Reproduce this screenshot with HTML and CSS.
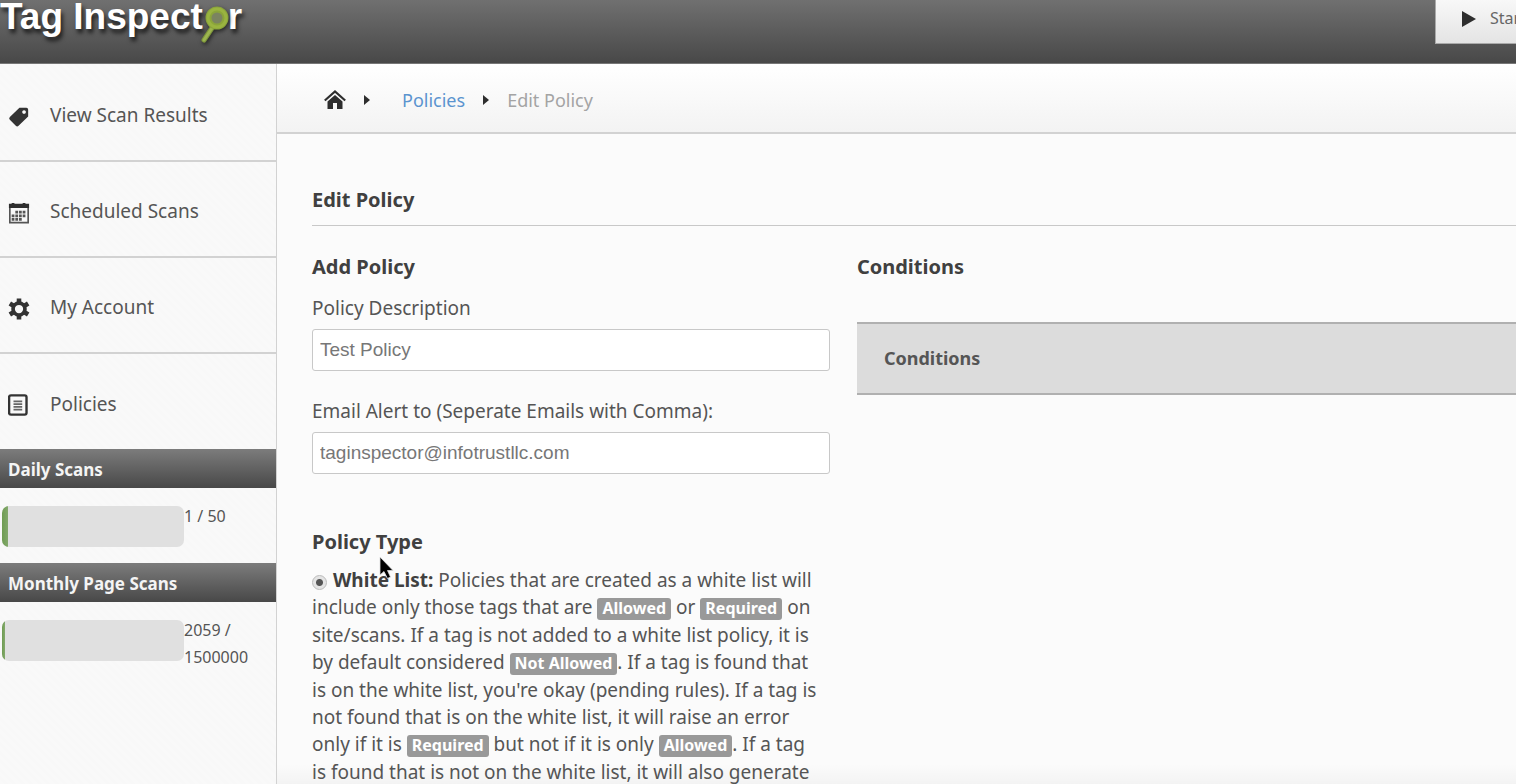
FILE: index.html
```
<!DOCTYPE html>
<html lang="en">
<head>
<meta charset="utf-8">
<title>Tag Inspector - Edit Policy</title>
<link rel="stylesheet" href="styles.css">
</head>
<body>
<header class="topbar">
  <a class="logo" href="#">Tag Inspect<svg class="lens" width="30" height="42" viewBox="0 0 30 42" aria-hidden="true"><path d="M12 26 4 38" stroke="#7d963a" stroke-width="5" stroke-linecap="round"/><path d="M12 26 4 38" stroke="#9db550" stroke-width="3" stroke-linecap="round"/><circle cx="17" cy="16" r="8.5" fill="#7b8460" stroke="#8ba53a" stroke-width="6"/><circle cx="17" cy="16" r="9" fill="none" stroke="#9ab440" stroke-width="3"/></svg>r</a>
  <button class="start" type="button"><svg width="14" height="16" viewBox="0 0 14 16" aria-hidden="true"><path d="M0 0 14 8 0 16Z" fill="#2e2e2e"/></svg>Start</button>
</header>
<div class="shell">
  <aside class="sidebar">
    <nav class="menu">
      <a class="menu-item" href="#"><svg class="icon" viewBox="0 0 24 24" aria-hidden="true"><path fill="#333" fill-rule="evenodd" d="M12.500 2H20Q22 2 22 4V11.500L11.500 21.500Q10 23 8.500 21.500L2 15Q.5 13.500 2 12ZM17.500 4.500a2 2 0 1 0 .01 0Z"/></svg>View Scan Results</a>
      <a class="menu-item" href="#"><svg class="icon" viewBox="0 0 24 24" aria-hidden="true"><path fill="none" stroke="#555" stroke-width="1.800" d="M2 3V22.500H22V3"/><path fill="#2e2e2e" d="M1 2H4V1H7V2H16V1H19V2H23V6.500H1Z"/><path stroke="#555" stroke-width="3" stroke-dasharray="3 1" d="M8 11H20M4 15H20M4 19H16"/></svg>Scheduled Scans</a>
      <a class="menu-item" href="#"><svg class="icon" viewBox="0 0 24 24" aria-hidden="true"><g fill="none" stroke="#333"><circle cx="12" cy="12" r="6.500" stroke-width="4"/><path stroke-width="5" d="M12 .5V5M12 19V23.500M2 6 6 8.500M18 15.500 22 18M2 18 6 15.500M18 8.500 22 6"/></g></svg>My Account</a>
      <a class="menu-item" href="#"><svg class="icon" viewBox="0 0 24 24" aria-hidden="true"><rect x="1.200" y="1.500" width="19" height="21" rx="2" fill="none" stroke="#333" stroke-width="2.600"/><path stroke="#666" stroke-width="1.800" d="M6 8H15.500M6 11H15.500M6 14H15.500M6 17H15.500"/></svg>Policies</a>
    </nav>
    <section class="usage">
      <h2 class="usage-title">Daily Scans</h2>
      <div class="usage-row"><div class="meter"><span class="fill" style="width:6px"></span></div><span class="count">1 / 50</span></div>
    </section>
    <section class="usage">
      <h2 class="usage-title">Monthly Page Scans</h2>
      <div class="usage-row"><div class="meter"><span class="fill" style="width:3px"></span></div><span class="count">2059 / 1500000</span></div>
    </section>
  </aside>
  <main class="main">
    <nav class="crumbs" aria-label="Breadcrumb">
      <a class="home" href="#" aria-label="Home"><svg width="22" height="20" viewBox="0 0 22 20"><path fill="none" stroke="#2e2e2e" stroke-width="2.200" d="M.8 10.500 11 1.500 21.200 10.500"/><path fill="#2e2e2e" d="M11 5 18.500 11.500V19H13V13H9V19H3.500V11.500Z"/></svg></a>
      <svg class="arrow first" width="6" height="10" viewBox="0 0 6 10" aria-hidden="true"><path d="M0 0 6 5 0 10Z"/></svg>
      <a class="crumb-link" href="#">Policies</a>
      <svg class="arrow" width="6" height="10" viewBox="0 0 6 10" aria-hidden="true"><path d="M0 0 6 5 0 10Z"/></svg>
      <span class="crumb-current">Edit Policy</span>
    </nav>
    <div class="content">
      <h1 class="title">Edit Policy</h1>
      <div class="columns">
        <form class="form">
          <h2 class="heading">Add Policy</h2>
          <label class="label" for="desc">Policy Description</label>
          <input class="field" id="desc" type="text" value="Test Policy">
          <label class="label" for="mail">Email Alert to (Seperate Emails with Comma):</label>
          <input class="field" id="mail" type="text" value="taginspector@infotrustllc.com">
          <h2 class="heading type-heading">Policy Type<svg class="pointer" width="16" height="24" viewBox="0 0 16 24" aria-hidden="true"><path d="M1 1V19L5 15.500 8.500 22.500 11.500 21 8.500 14.500H14Z" fill="#000" stroke="#ddd" stroke-width=".8"/></svg></h2>
          <p class="text"><input class="radio" id="white" type="radio" name="type" checked><label for="white"><b>White List:</b></label> Policies that are created as a white list will<br>include only those tags that are <span class="tag">Allowed</span> or <span class="tag">Required</span> on<br>site/scans. If a tag is not added to a white list policy, it is<br>by default considered <span class="tag">Not Allowed</span>. If a tag is found that<br>is on the white list, you're okay (pending rules). If a tag is<br>not found that is on the white list, it will raise an error<br>only if it is <span class="tag">Required</span> but not if it is only <span class="tag">Allowed</span>. If a tag<br>is found that is not on the white list, it will also generate</p>
        </form>
        <section class="conditions">
          <h2 class="heading">Conditions</h2>
          <table class="table"><thead><tr><th scope="col">Conditions</th></tr></thead></table>
        </section>
      </div>
    </div>
  </main>
</div>
</body>
</html>
```
FILE: styles.css
```
* { box-sizing: border-box; }
body {
  margin: 0;
  height: 100vh;
  overflow: hidden;
  display: flex;
  flex-direction: column;
  background: #fbfbfb;
  color: #555;
  font: 19px/27px "Noto Sans", "Open Sans", sans-serif;
}
a { color: inherit; text-decoration: none; }
h1, h2, p { margin: 0; }
svg { flex: none; }

.topbar {
  display: flex;
  justify-content: space-between;
  align-items: flex-start;
  flex: none;
  height: 64px;
  background: linear-gradient(#707070, #484848);
  border-bottom: 1px solid #777;
  overflow: hidden;
}
.logo {
  display: flex;
  color: #fff;
  font: bold 37px/34px "Liberation Sans", Arial, sans-serif;
  text-shadow: 2px 4px 4px rgba(0, 0, 0, .7);
}
.lens { margin: 2px -2px 0 -3px; filter: drop-shadow(1px 2px 2px rgba(0, 0, 0, .6)); }
.start {
  display: flex;
  align-items: center;
  gap: 14px;
  width: 81px;
  height: 44px;
  padding: 0 0 6px 26px;
  border: 1px solid #aaa;
  border-width: 0 0 1px 1px;
  background: linear-gradient(#f8f8f8, #e4e4e4);
  color: #666;
  font: 16px/27px "Noto Sans", "Open Sans", sans-serif;
  overflow: hidden;
}

.shell { display: flex; flex: 1; min-height: 0; }
.sidebar {
  flex: none;
  width: 277px;
  border-right: 1px solid #d2d2d2;
  background: repeating-linear-gradient(45deg, #f9f9f9 0 3px, #f8f8f8 3px 6px);
}
.menu { padding-top: 1px; }
.menu-item {
  display: flex;
  align-items: center;
  gap: 20px;
  height: 97px;
  padding: 6px 8px 0;
  border-bottom: 2px solid #d2d2d2;
  margin-bottom: -1px;
}
.menu-item:last-child { height: 96px; border-bottom: 0; margin-bottom: 0; }
.icon { width: 22px; height: 22px; margin-top: 2px; }
.usage { height: 114px; }
.usage-title {
  padding: 7px 8px 5px;
  background: linear-gradient(#7c7c7c, #484848);
  color: #f4f4f4;
  font-size: 17px;
  line-height: 27px;
}
.usage-row { display: flex; align-items: flex-start; padding: 15px 0 0 2px; }
.meter {
  flex: none;
  width: 182px;
  height: 41px;
  margin-top: 3px;
  border-radius: 7px;
  background: #e0e0e0;
  overflow: hidden;
}
.fill { display: block; height: 100%; background: linear-gradient(90deg, #6f9c52, #83a96c); }
.count { width: 76px; font-size: 16px; }

.main {
  flex: 1;
  min-width: 0;
  background: linear-gradient(transparent calc(100% - 20px), rgba(0, 0, 0, .03));
  overflow: hidden;
}
.crumbs {
  display: flex;
  align-items: center;
  height: 70px;
  padding: 4px 0 0 47px;
  border-bottom: 2px solid #d2d2d2;
  background: linear-gradient(#fff, #f3f3f3);
  font-size: 18px;
}
.home { display: flex; }
.arrow { margin: 0 18px; fill: #2e2e2e; }
.arrow.first { margin-right: 32px; }
.crumb-link { color: #5b94cf; }
.crumb-current { color: #a4a4a4; }
.content { padding: 52px 0 0 35px; }
.title { padding-bottom: 12px; border-bottom: 1px solid #c8c8c8; font-size: 20px; line-height: 27px; color: #404040; }
.columns { display: grid; grid-template-columns: 11fr 14fr; gap: 27px; padding-top: 27px; }
.heading { font-size: 20px; line-height: 27px; color: #404040; }
.label { display: block; margin-top: 15px; }
.field {
  display: block;
  width: 100%;
  height: 42px;
  margin: 7px 0 27px;
  padding: 0 7px;
  border: 1px solid #c8c8c8;
  border-radius: 3px;
  background: #fff;
  color: #777;
  font: 19px "Liberation Sans", Arial, sans-serif;
}
.type-heading { position: relative; margin-top: 54px; }
.pointer { position: absolute; left: 67px; top: 28px; }
.text { margin-top: 12px; white-space: nowrap; }
.text b { color: #404040; }
.radio {
  appearance: none;
  width: 15px;
  height: 15px;
  margin: 0 6px 0 0;
  border: 1px solid #bbb;
  border-radius: 50%;
  background: radial-gradient(circle, #555 0 3px, #e4e4e4 4px);
  vertical-align: -3px;
}
.tag {
  display: inline-block;
  margin-bottom: 2px;
  padding: 0 5px 2px;
  border-radius: 3px;
  background: #999;
  color: #fff;
  font-size: 16px;
  font-weight: bold;
  line-height: 20px;
}
.table { width: 100%; margin-top: 42px; border-collapse: collapse; font-size: 18px; }
.table th {
  height: 71px;
  padding: 0 27px;
  border: solid #b0b0b0;
  border-width: 2px 0;
  background: #dcdcdc;
  text-align: left;
}
```
